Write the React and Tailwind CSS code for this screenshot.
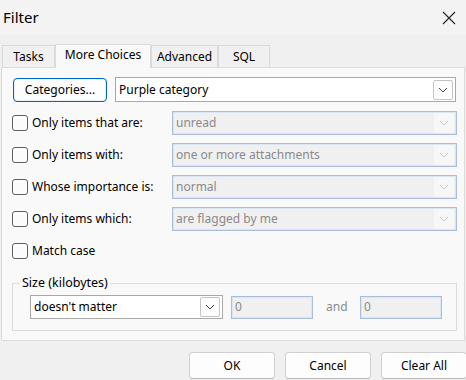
import React from 'react';

const Chevron = ({ disabled }) => (
  <svg width="10" height="6" viewBox="0 0 10 6" fill="none">
    <path d="M1 1l4 4 4-4" stroke={disabled ? '#c8c8c8' : '#444'} strokeWidth="1" />
  </svg>
);

const Combo = ({ value, className, disabled }) => (
  <div
    className={
      disabled
        ? `flex items-center h-[24px] border border-[#a9bfd9] shadow-[inset_0_0_0_1px_#dbe6f3] bg-[#f0f0f0] text-[#8a8a8a] ${className}`
        : `flex items-center h-[24px] border border-[#a8a8a8] bg-white text-black ${className}`
    }
  >
    <span className="flex-1 pl-[3px] truncate">{value}</span>
    <span
      className={
        disabled
          ? 'mr-[2px] w-[20px] h-[20px] flex items-center justify-center bg-[#f7f7f7]'
          : 'mr-[2px] w-[20px] h-[20px] flex items-center justify-center border border-[#c4c4c4] rounded-[2px] bg-[#fdfdfd]'
      }
    >
      <Chevron disabled={disabled} />
    </span>
  </div>
);

const CheckRow = ({ label, value }) => (
  <div className="flex items-center h-[24px]">
    <span className="ml-[10px] w-[16px] h-[16px] rounded-[3px] border border-[#5f5f5f] bg-[#fbfbfb]" />
    <span className="ml-[4px] w-[140px]">{label}</span>
    {value && <Combo value={value} disabled className="w-[285px]" />}
  </div>
);

const Tab = ({ label, active, w }) => (
  <div
    className={
      active
        ? `h-[24px] ${w} border border-b-0 border-[#dadada] bg-[#f9f9f9] flex items-center justify-center -mb-px relative z-10 pb-[3px]`
        : `h-[22px] ${w} border border-b-0 border-[#dadada] bg-[#f0f0f0] flex items-center justify-center pt-[1px]`
    }
  >
    {label}
  </div>
);

export default function App() {
  return (
    <div className="w-[466px] h-[380px] overflow-hidden bg-[#f0f0f0] text-[12px] text-black font-['Segoe_UI','Noto_Sans',sans-serif] leading-[16px]">
      {/* barre de titre */}
      <div className="h-[35px] bg-[#f3f3f3] flex items-center justify-between pl-[3px] pr-[10px]">
        <span className="text-[15px] pb-[2px]">Filter</span>
        <svg width="14" height="14" viewBox="0 0 14 14" fill="none">
          <path d="M1 1l12 12M13 1L1 13" stroke="#222" strokeWidth="1.1" />
        </svg>
      </div>

      {/* onglets */}
      <div className="h-[32px] flex items-end pl-[2px] pt-[8px]">
        <Tab label="Tasks" w="w-[53px]" />
        <Tab label="More Choices" w="w-[96px]" active />
        <Tab label="Advanced" w="w-[67px]" />
        <Tab label="SQL" w="w-[52px]" />
      </div>

      {/* panneau */}
      <div className="ml-[1px] w-[464px] h-[274px] border border-[#dcdcdc] bg-[#f9f9f9] pt-[9px]">
        <div className="flex items-center h-[25px]">
          <button className="ml-[11px] w-[94px] h-[24px] border border-[#0067c0] rounded-[4px] bg-[#fdfdfd] shadow-[inset_0_0_0_1px_#e6f0fa]">
            Categories...
          </button>
          <Combo value="Purple category" className="ml-[8px] w-[341px] h-[25px]" />
        </div>

        <div className="mt-[9px] flex flex-col gap-[8px]">
          <CheckRow label="Only items that are:" value="unread" />
          <CheckRow label="Only items with:" value="one or more attachments" />
          <CheckRow label="Whose importance is:" value="normal" />
          <CheckRow label="Only items which:" value="are flagged by me" />
          <CheckRow label="Match case" />
        </div>

        <fieldset className="mt-[12px] ml-[10px] w-[445px] border border-[#dcdcdc] pb-[11px]">
          <legend className="ml-[7px] px-[2px] text-[12.5px]">Size (kilobytes)</legend>
          <div className="mt-[4px] flex items-center">
            <Combo value="doesn't matter" className="ml-[17px] w-[193px] h-[24px]" />
            <div className="ml-[8px] w-[82px] h-[23px] border border-[#a9bfd9] shadow-[inset_0_0_0_1px_#dbe6f3] bg-[#f0f0f0] text-[#8a8a8a] pl-[3px] flex items-center">0</div>
            <span className="ml-[13px] w-[34px] text-[#8a8a8a]">and</span>
            <div className="w-[82px] h-[23px] border border-[#a9bfd9] shadow-[inset_0_0_0_1px_#dbe6f3] bg-[#f0f0f0] text-[#8a8a8a] pl-[3px] flex items-center">0</div>
          </div>
        </fieldset>
      </div>

      {/* boutons */}
      <div className="mt-[11px] flex justify-end gap-[10px] -mr-px">
        <button className="w-[86px] h-[27px] border border-[#d0d0d0] border-b-[#b8b8b8] rounded-[4px] bg-[#fdfdfd]">OK</button>
        <button className="w-[86px] h-[27px] border border-[#d0d0d0] border-b-[#b8b8b8] rounded-[4px] bg-[#fdfdfd]">Cancel</button>
        <button className="w-[86px] h-[27px] border border-[#d0d0d0] border-b-[#b8b8b8] rounded-[4px] bg-[#fdfdfd]">Clear All</button>
      </div>
    </div>
  );
}
